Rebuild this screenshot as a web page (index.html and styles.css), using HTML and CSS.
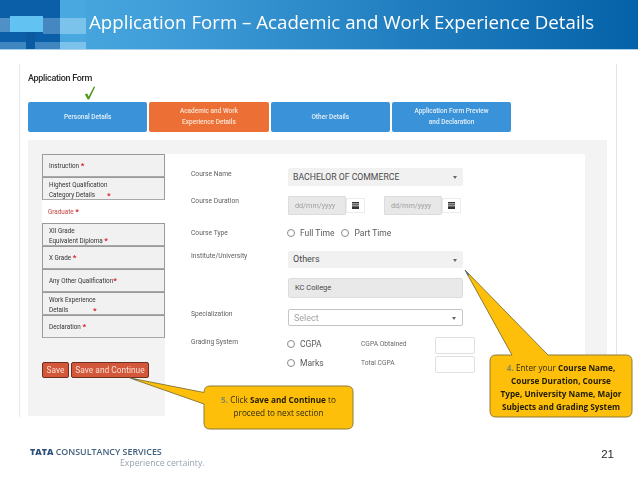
FILE: index.html
```html
<!DOCTYPE html>
<html lang="en">
<head>
<meta charset="utf-8">
<title>Application Form</title>
<link rel="stylesheet" href="styles.css">
</head>
<body>
<div class="slide">
  <header class="banner">
    <svg class="banner-logo" width="86" height="49" viewBox="0 0 86 49">
      <rect width="60" height="49" fill="#0b5fa8"/>
      <rect x="60" width="26" height="49" fill="#4aa8e0"/>
      <rect y="18" width="10" height="14" fill="#4f90c6"/>
      <rect x="43" y="18" width="17" height="16" fill="#4587c0"/>
      <rect x="60" y="18" width="26" height="16" fill="#7cc3ec"/>
      <rect x="10" y="16" width="33" height="16" fill="#62c2f2"/>
      <rect y="42" width="26" height="7" fill="#3f85bf"/>
      <rect x="35" y="42" width="25" height="7" fill="#3f85bf"/>
      <rect x="60" y="42" width="26" height="7" fill="#7cc3ec"/>
      <rect x="26" y="32" width="9" height="17" fill="#0a5aa2"/>
    </svg>
    <h1 class="banner-title">Application Form – Academic and Work Experience Details</h1>
  </header>

  <main class="sheet">
    <h2 class="form-heading">Application Form</h2>
    <div class="check-row">
      <svg width="12" height="14" viewBox="0 0 14 16" preserveAspectRatio="none"><path d="M1 9.500 L3.800 8.500 L5.500 12 L11.500 0.500 L13 1 L6 15.500 L4.300 15.500 Z" fill="#4c9a1f"/></svg>
    </div>
    <nav class="tabs">
      <div class="tab">Personal Details</div>
      <div class="tab tab-active">Academic and Work<br>Experience Details</div>
      <div class="tab">Other Details</div>
      <div class="tab">Application Form Preview<br>and Declaration</div>
    </nav>

    <section class="panel">
      <aside class="side">
        <ul class="steps">
          <li class="step">Instruction <b>*</b></li>
          <li class="step step-two">Highest Qualification<br>Category Details<b class="far">*</b></li>
          <li class="step step-current">Graduate <b>*</b></li>
          <li class="step step-two">XII Grade<br>Equivalent Diploma <b>*</b></li>
          <li class="step">X Grade <b>*</b></li>
          <li class="step">Any Other Qualification<b>*</b></li>
          <li class="step step-two step-work">Work Experience<br>Details<b class="far">*</b></li>
          <li class="step">Declaration <b>*</b></li>
        </ul>
        <div class="actions">
          <button class="btn" type="button">Save</button>
          <button class="btn btn-main" type="button">Save and Continue</button>
        </div>
      </aside>

      <form class="fields">
        <div class="row row-name">
          <span class="label">Course Name</span>
          <div class="select">BACHELOR OF COMMERCE<i class="caret"></i></div>
        </div>
        <div class="row row-dates">
          <span class="label">Course Duration</span>
          <div class="dates">
            <div class="date"><div class="date-input">dd/mm/yyyy</div><div class="cal"><svg width="7" height="7" viewBox="0 0 7 7"><path d="M0 0H7V1.500H0ZM0 2.200H7V3.600H0ZM0 4.200H7V7H0Z" fill="#333"/></svg></div></div>
            <div class="date"><div class="date-input">dd/mm/yyyy</div><div class="cal"><svg width="7" height="7" viewBox="0 0 7 7"><path d="M0 0H7V1.500H0ZM0 2.200H7V3.600H0ZM0 4.200H7V7H0Z" fill="#333"/></svg></div></div>
          </div>
        </div>
        <div class="row row-type">
          <span class="label">Course Type</span>
          <div class="radios">
            <span class="radio"><i class="dot"></i>Full Time</span>
            <span class="radio"><i class="dot"></i>Part Time</span>
          </div>
        </div>
        <div class="row row-inst">
          <span class="label">Institute/University</span>
          <div class="select select-large">Others<i class="caret"></i></div>
        </div>
        <div class="row row-college">
          <span class="label"></span>
          <div class="readonly">KC College</div>
        </div>
        <div class="row row-spec">
          <span class="label">Specialization</span>
          <div class="select select-outline">Select<i class="caret"></i></div>
        </div>
        <div class="row row-grade">
          <span class="label">Grading System</span>
          <div class="grades">
            <span class="radio"><i class="dot"></i>CGPA</span>
            <span class="mini-label">CGPA Obtained</span>
            <div class="box"></div>
            <span class="radio"><i class="dot"></i>Marks</span>
            <span class="mini-label">Total CGPA</span>
            <div class="box"></div>
          </div>
        </div>
      </form>
      <div class="strip"></div>
    </section>
  </main>

  <footer class="foot">
    <div class="brand">
      <div class="brand-name"><b>TATA</b> CONSULTANCY SERVICES</div>
      <div class="brand-tag">Experience certainty.</div>
    </div>
    <div class="page-no">21</div>
  </footer>

  <svg class="bubbles" width="638" height="478" viewBox="0 0 638 478">
    <path class="bubble-shape" d="M210 386 H347 Q353 386 353 392 V423 Q353 429 347 429 H210 Q204 429 204 423 V404 L130 378 L204 392.500 Q204 386 210 386 Z"/>
    <path class="bubble-shape" d="M496 355 H512 L465 270 L548 355 H626 Q632 355 632 361 V411 Q632 417 626 417 H496 Q490 417 490 411 V361 Q490 355 496 355 Z"/>
    <path class="bubble-tip" d="M130 378 L138 379.500 L136 380.200 Z"/>
    <path class="bubble-tip" d="M465 270 L469 274 L468 276 Z"/>
  </svg>
  <div class="note note-save"><em>5.</em> Click <b>Save and Continue</b> to<br>proceed to next section</div>
  <div class="note note-enter"><em>4.</em> Enter your <b>Course Name,<br>Course Duration, Course<br>Type, University Name, Major<br>Subjects and Grading System</b></div>
</div>
</body>
</html>
```

FILE: styles.css
```css
* { box-sizing: border-box; }
html, body { margin: 0; padding: 0; background: #fff; }
.slide {
  position: relative;
  width: 638px;
  height: 478px;
  overflow: hidden;
  font-family: Roboto, "Liberation Sans", sans-serif;
  filter: blur(0.3px);
}
.banner {
  display: flex;
  align-items: center;
  height: 50px;
  background: linear-gradient(90deg, #4eaee3 0%, #3d9ad6 30%, #1f7dbf 65%, #0562a8 100%);
  border-bottom: 1px solid #a9d3ec;
}
.banner-logo { flex: none; }
.banner-title {
  margin: -7px 0 0 3px;
  font-family: "Open Sans", sans-serif;
  font-weight: 400;
  font-size: 18.700px;
  color: #fff;
  white-space: nowrap;
}
.sheet {
  width: 598px;
  height: 353px;
  margin: 14px 0 0 19px;
  padding: 8px 0 0 8px;
  border-left: 1px solid #e9e9e9;
  border-right: 1px solid #e4e4e4;
}
.form-heading {
  margin: 0;
  height: 12px;
  font-size: 9px;
  letter-spacing: -0.3px;
  line-height: 12px;
  font-weight: 500;
  color: #2b2b2b;
}
.check-row { height: 18px; padding: 2px 0 0 56px; }
.check-row svg { display: block; }
.tabs { display: flex; gap: 2px; height: 30px; }
.tab {
  width: 119.300px;
  display: flex;
  align-items: center;
  justify-content: center;
  text-align: center;
  background: #3a93d8;
  border-radius: 2px;
  color: #e4f0fa;
  font-size: 6.500px;
  line-height: 11px;
  font-weight: 500;
}
.tab-active { background: #ec7035; color: #fbe3d4; }
.panel {
  display: flex;
  width: 579px;
  height: 276px;
  margin-top: 8px;
  background: #f3f3f3;
}
.side { width: 137px; padding: 14px 0 0 14px; flex: none; }
.steps { list-style: none; margin: 0; padding: 0; }
.step {
  position: relative;
  height: 23px;
  padding: 7px 0 0 6px;
  background: #f1f1f1;
  border: 1px solid #9a9a9a;
  border-bottom-color: #a8a8a8;
  font-size: 6.300px;
  line-height: 9.500px;
  color: #333;
}
.step-two { padding-top: 3px; }
.step b { color: #d9202a; font-size: 8px; line-height: 6px; font-weight: 700; }
.step b.far { position: absolute; left: 64px; top: 15px; }
.step-work b.far { left: 50px; }
.step-current {
  background: #fff;
  border-color: #fff;
  color: #c0453f;
  padding-left: 5px;
}
.actions { display: flex; gap: 2px; margin-top: 24px; }
.btn {
  height: 16px;
  padding: 0;
  width: 27px;
  background: #d3573a;
  border: 1px solid #6e2f20;
  border-radius: 2px;
  color: #f8ddd2;
  font-family: Roboto, sans-serif;
  font-size: 8.400px;
  line-height: 12px;
}
.btn-main { width: 78px; }
.fields { width: 420px; flex: none; background: #fff; margin-top: 14px; padding: 0 0 0 26px; }
.row { display: flex; position: relative; }
.label {
  flex: none;
  width: 97px;
  font-size: 6.700px;
  line-height: 10px;
  color: #5f5f5f;
}
.row-name { margin-top: 14px; height: 18px; }
.row-name .label { margin-top: 1px; }
.row-dates { margin-top: 10px; height: 19px; }
.row-type { margin-top: 9px; height: 27px; }
.row-type .label { margin-top: 4px; }
.row-inst { height: 17px; }
.row-college { margin-top: 10px; height: 20px; }
.row-spec { margin-top: 11px; height: 17px; }
.row-grade { margin-top: 10px; }
.row-grade .label { margin-top: 1px; }
.select {
  position: relative;
  width: 175px;
  height: 18px;
  padding-left: 5px;
  background: #f1f1f1;
  border-radius: 2px;
  font-size: 8.700px;
  line-height: 18px;
  color: #4a4a4a;
}
.select-large { height: 17px; line-height: 17px; font-size: 9px; }
.select-outline {
  height: 17px;
  line-height: 16px;
  background: #fff;
  border: 1px solid #c4c4c4;
  color: #a3a3a3;
  font-size: 9px;
}
.caret {
  position: absolute;
  right: 6px;
  top: 50%;
  margin-top: -1px;
  border-left: 2px solid transparent;
  border-right: 2px solid transparent;
  border-top: 3px solid #666;
}
.dates { display: flex; gap: 19px; }
.date { display: flex; align-items: center; }
.date-input {
  width: 58px;
  height: 19px;
  padding-left: 6px;
  background: #e8e8e8;
  border: 1px solid #dcdcdc;
  border-radius: 1px;
  font-size: 7.200px;
  line-height: 17px;
  color: #9d9d9d;
}
.cal {
  width: 19px;
  height: 15px;
  display: flex;
  align-items: center;
  justify-content: center;
  border: 1px solid #ececec;
  background: #fff;
}
.radios { display: flex; gap: 7px; align-items: center; height: 18px; margin-left: -1px; }
.radio {
  display: flex;
  align-items: center;
  gap: 5px;
  font-size: 8.500px;
  color: #5a5a5a;
  line-height: 12px;
}
.dot {
  width: 8px;
  height: 8px;
  border: 1px solid #8a8a8a;
  border-radius: 50%;
  background: #fff;
}
.readonly {
  width: 175px;
  height: 20px;
  padding-left: 6px;
  background: #e9e9e9;
  border: 1px solid #dddddd;
  border-radius: 2px;
  font-size: 7.500px;
  line-height: 18px;
  color: #4a4a4a;
}
.grades {
  display: grid;
  grid-template-columns: 74px 74px 40px;
  grid-auto-rows: 19px;
  align-items: center;
  margin-left: -1px;
}
.grades .radio { margin-top: -3px; }
.mini-label { font-size: 6.700px; color: #6a6a6a; margin-top: -4px; }
.box { width: 40px; height: 17px; background: #fff; border: 1px solid #e0e0e0; border-radius: 2px; }
.strip { flex: none; width: 22px; }
.foot {
  display: flex;
  justify-content: space-between;
  margin-top: 29px;
  padding: 0 24px 0 30px;
}
.brand-name {
  font-family: "Open Sans", sans-serif;
  font-size: 8.900px;
  line-height: 12px;
  font-weight: 600;
  color: #42607f;
  white-space: nowrap;
}
.brand-name b { color: #2c4f7a; font-weight: 800; }
.brand-tag {
  margin: 0 0 0 90px;
  font-family: "Open Sans", sans-serif;
  font-size: 8.700px;
  line-height: 11px;
  color: #97a3b0;
}
.page-no {
  font-family: "Liberation Sans", sans-serif;
  font-size: 11.500px;
  line-height: 13px;
  margin-top: 2px;
  color: #2a2a2a;
}
.bubbles { position: absolute; left: 0; top: 0; pointer-events: none; }
.bubble-shape { fill: #fdbf0a; stroke: #8d7c35; stroke-width: 1; }
.bubble-tip { fill: #3f6f9a; }
.note {
  position: absolute;
  text-align: center;
  font-family: "Open Sans", sans-serif;
  color: #2e2a10;
  font-size: 8.200px;
  line-height: 13px;
  white-space: nowrap;
}
.note em { font-style: normal; font-weight: 700; color: #8a8a60; }
.note b { font-weight: 700; color: #211c04; }
.note-save { left: 204px; top: 393px; width: 149px; }
.note-enter { left: 490px; top: 361px; width: 142px; }
```
